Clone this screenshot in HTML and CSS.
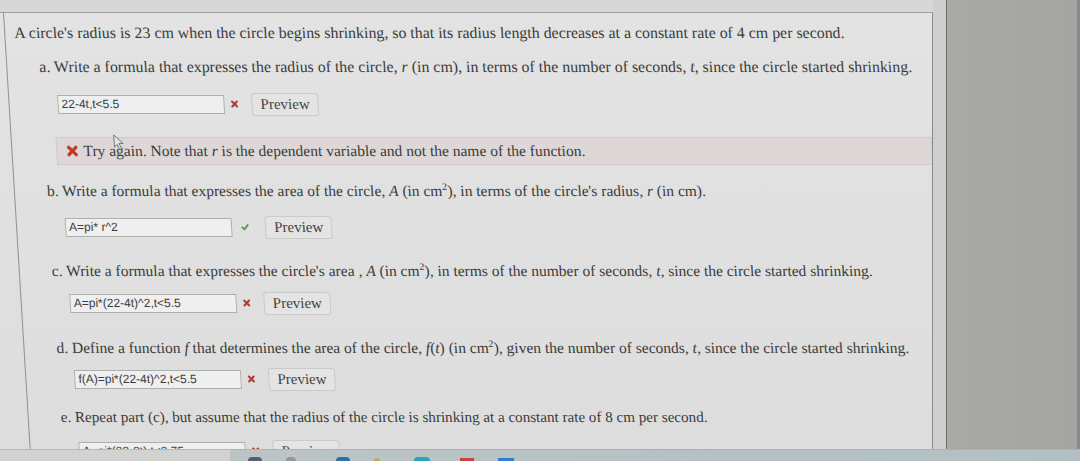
FILE: index.html
```html
<!DOCTYPE html>
<html>
<head>
<meta charset="utf-8">
<link rel="stylesheet" href="styles.css">
</head>
<body>
<div class="screen">
  <div class="panel">
    <div class="content">
      <p class="intro">A circle's radius is 23 cm when the circle begins shrinking, so that its radius length decreases at a constant rate of 4 cm per second.</p>

      <p class="q qa">a. Write a formula that expresses the radius of the circle, <i>r</i> (in cm), in terms of the number of seconds, <i>t</i>, since the circle started shrinking.</p>
      <div class="answer ra">
        <span class="field">22-4t,t&lt;5.5</span>
        <svg class="mark" viewBox="0 0 10 10"><path d="M2 2 L8 8 M8 2 L2 8" stroke="#b33a30" stroke-width="2.6" stroke-linecap="round"/></svg>
        <span class="btn">Preview</span>
      </div>

      <div class="feedback">
        <svg class="fb-icon" viewBox="0 0 10 10"><path d="M2 2 L8 8 M8 2 L2 8" stroke="#c0392b" stroke-width="2.8" stroke-linecap="round"/></svg>
        <span>Try again. Note that <i>r</i> is the dependent variable and not the name of the function.</span>
        <svg class="cursor" viewBox="0 0 12 18"><path d="M1 1 L1 14 L4 11 L6.5 16.5 L8.5 15.5 L6 10 L10.5 10 Z" fill="#e4e4e4" stroke="#666" stroke-width="0.9" stroke-linejoin="round"/></svg>
      </div>

      <p class="q qb">b. Write a formula that expresses the area of the circle, <i>A</i> (in cm<sup>2</sup>), in terms of the circle's radius, <i>r</i> (in cm).</p>
      <div class="answer rb">
        <span class="field">A=pi* r^2</span>
        <svg class="mark" viewBox="0 0 10 10"><path d="M1.5 5.5 L4 8 L8.5 2.5" fill="none" stroke="#4f9a3a" stroke-width="2.2" stroke-linecap="round" stroke-linejoin="round"/></svg>
        <span class="btn">Preview</span>
      </div>

      <p class="q qc">c. Write a formula that expresses the circle's area , <i>A</i> (in cm<sup>2</sup>), in terms of the number of seconds, <i>t</i>, since the circle started shrinking.</p>
      <div class="answer rc">
        <span class="field">A=pi*(22-4t)^2,t&lt;5.5</span>
        <svg class="mark" viewBox="0 0 10 10"><path d="M2 2 L8 8 M8 2 L2 8" stroke="#b33a30" stroke-width="2.6" stroke-linecap="round"/></svg>
        <span class="btn">Preview</span>
      </div>

      <p class="q qd">d. Define a function <i>f</i> that determines the area of the circle, <i>f</i>(<i>t</i>) (in cm<sup>2</sup>), given the number of seconds, <i>t</i>, since the circle started shrinking.</p>
      <div class="answer rd">
        <span class="field">f(A)=pi*(22-4t)^2,t&lt;5.5</span>
        <svg class="mark" viewBox="0 0 10 10"><path d="M2 2 L8 8 M8 2 L2 8" stroke="#b33a30" stroke-width="2.6" stroke-linecap="round"/></svg>
        <span class="btn">Preview</span>
      </div>

      <p class="q qe">e. Repeat part (c), but assume that the radius of the circle is shrinking at a constant rate of 8 cm per second.</p>
      <div class="answer re">
        <span class="field">A=pi*(22-8t),t&lt;2.75</span>
        <svg class="mark" viewBox="0 0 10 10"><path d="M2 2 L8 8 M8 2 L2 8" stroke="#b33a30" stroke-width="2.6" stroke-linecap="round"/></svg>
        <span class="btn">Preview</span>
      </div>
    </div>
  </div>
  <div class="gutter"></div>
  <div class="sidebar"></div>
</div>
<div class="taskbar">
  <div class="tb-left"></div>
  <div class="tb-icons">
    <span class="ic ic1"></span>
    <span class="ic ic2"></span>
    <span class="ic ic3"></span>
    <span class="ic ic4"></span>
    <span class="ic ic5"></span>
    <span class="ic ic6"></span>
    <span class="ic ic7"></span>
  </div>
</div>
</body>
</html>
```

FILE: styles.css
```css
html, body {
  margin: 0;
  padding: 0;
}
body {
  width: 1080px;
  height: 461px;
  overflow: hidden;
  background: #d7d8d6;
  font-family: "Liberation Serif", "Times New Roman", serif;
  color: #3b3b3b;
}
.screen {
  display: flex;
  height: 449px;
}
.panel {
  width: 932px;
  flex: none;
  margin-top: 12px;
  border-top: 1px solid #9c9d9c;
  border-right: 1px solid #8a8b8a;
  background: linear-gradient(180deg, #e2e3e2 0%, #dcdddc 100%);
  overflow: hidden;
}
.content {
  margin-left: 3px;
  padding-top: 10px;
  border-left: 1px solid #8f908f;
  transform: skewX(3.5deg);
  transform-origin: 0 0;
  height: 520px;
}
p {
  margin: 0;
}
.intro {
  font-size: 15.9px;
  line-height: 20px;
  padding-left: 9px;
  white-space: nowrap;
}
.q {
  font-size: 15.5px;
  line-height: 20px;
  padding-left: 32px;
  white-space: nowrap;
}
.q sup {
  font-size: 10px;
  line-height: 0;
  vertical-align: 6px;
}
.qa { margin-top: 14px; font-size: 15.9px; }
.qb { margin-top: 16px; font-size: 15.5px; }
.qc { margin-top: 22px; font-size: 15.5px; }
.qd { margin-top: 23px; font-size: 15.5px; }
.qe { margin-top: 16px; font-size: 15.1px; }

.answer {
  display: flex;
  align-items: center;
  padding-left: 48px;
  height: 24px;
}
.ra { margin-top: 15px; }
.rb { margin-top: 14px; }
.rc { margin-top: 10px; }
.rd { margin-top: 9px; }
.re { margin-top: 12px; }

.field {
  box-sizing: border-box;
  width: 167px;
  height: 19px;
  border: 1px solid #aeb0ae;
  background: #eeefee;
  font-family: "Liberation Sans", Arial, sans-serif;
  font-size: 12px;
  line-height: 17px;
  padding-left: 3px;
  color: #3d3d3d;
  white-space: nowrap;
  overflow: hidden;
}
.mark {
  width: 8px;
  height: 8px;
  margin-left: 6px;
  margin-right: 13px;
}
.rb .mark { margin-left: 9px; margin-right: 16px; }
.btn {
  box-sizing: border-box;
  height: 23px;
  padding: 0 8px;
  border: 1px solid #c9cac9;
  border-radius: 3px;
  background: #e3e4e3;
  font-size: 15px;
  line-height: 21px;
  color: #444;
}

.feedback {
  position: relative;
  display: flex;
  align-items: center;
  box-sizing: border-box;
  margin-top: 21px;
  margin-left: 44px;
  width: 876px;
  height: 28px;
  padding-left: 9px;
  border: 1px solid #cfcaca;
  background: #ddd8d7;
  font-size: 15.5px;
  white-space: nowrap;
}
.fb-icon {
  width: 12px;
  height: 12px;
  margin-right: 5px;
}
.feedback i, .q i {
  font-style: italic;
}
.cursor {
  position: absolute;
  left: 56px;
  top: -4px;
  width: 12px;
  height: 17px;
}

.gutter {
  width: 13px;
  flex: none;
  background: #cfd0ce;
  border-right: 1px solid #6f706e;
}
.sidebar {
  flex: 1;
  background: linear-gradient(90deg, #a9aaa7 0%, #a4a5a2 100%);
  border-right: 3px solid #8a8b89;
}

.taskbar {
  display: flex;
  height: 12px;
}
.tb-left {
  width: 230px;
  background: #d2d3d1;
  border-top: 1px solid #b8b9b7;
}
.tb-icons {
  flex: 1;
  display: flex;
  align-items: flex-end;
  background: linear-gradient(90deg, #bcc4c6 0%, #b5c1c5 60%, #b2bfc3 100%);
  border-top: 1px solid #a9b4b7;
  padding-left: 12px;
}
.ic {
  display: block;
  height: 4px;
  border-radius: 6px 6px 0 0;
}
.ic1 { width: 14px; background: #56606a; margin-left: 6px; }
.ic2 { width: 10px; background: #8f979b; margin-left: 24px; }
.ic3 { width: 14px; background: #2e6fa8; margin-left: 40px; }
.ic4 { width: 6px; background: #c9a648; margin-left: 24px; height: 3px; }
.ic5 { width: 16px; background: #2aa3b3; margin-left: 34px; }
.ic6 { width: 14px; background: #c4453c; margin-left: 30px; height: 3px; border-radius: 0; }
.ic7 { width: 16px; background: #2f7fd1; margin-left: 24px; height: 3px; border-radius: 0; }
```
